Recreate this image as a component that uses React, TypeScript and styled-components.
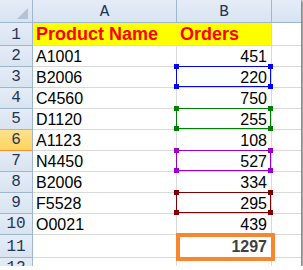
import React from 'react';
import styled, { createGlobalStyle } from 'styled-components';

interface OrderRow {
  product: string;
  orders: number;
  mark?: string;
}

const rows: OrderRow[] = [
  { product: 'A1001', orders: 451 },
  { product: 'B2006', orders: 220, mark: '#0000ff' },
  { product: 'C4560', orders: 750 },
  { product: 'D1120', orders: 255, mark: '#008000' },
  { product: 'A1123', orders: 108 },
  { product: 'N4450', orders: 527, mark: '#9900cc' },
  { product: 'B2006', orders: 334 },
  { product: 'F5528', orders: 295, mark: '#800000' },
  { product: 'O0021', orders: 439 },
];

// sum of the marked cells (220 + 255 + 527 + 295)
const total = rows.filter((r) => r.mark).reduce((sum, r) => sum + r.orders, 0);

const GlobalStyle = createGlobalStyle`
  html, body {
    margin: 0;
    padding: 0;
    background: #ffffff;
  }
`;

const App = () => {
  return (
    <>
      <GlobalStyle />
      <Frame>
        <Sheet>
          <Corner>
            <svg width="11" height="11" viewBox="0 0 11 11">
              <polygon points="11,0 11,11 0,11" fill="#b3c3d6" />
            </svg>
          </Corner>
          <ColHead>A</ColHead>
          <ColHead>B</ColHead>
          <ColHead />

          <RowHead>1</RowHead>
          <Cell $fill="#ffff00" $noRight>
            <Title>Product Name</Title>
          </Cell>
          <Cell $fill="#ffff00">
            <Title>Orders</Title>
          </Cell>
          <Cell />

          {rows.map((row, i) => (
            <React.Fragment key={i}>
              <RowHead $active={i + 2 === 6}>{i + 2}</RowHead>
              <Cell>{row.product}</Cell>
              <Cell $right>
                {row.orders}
                {row.mark && (
                  <Marquee $color={row.mark}>
                    <Handle $color={row.mark} $top $left />
                    <Handle $color={row.mark} $top />
                    <Handle $color={row.mark} $left />
                    <Handle $color={row.mark} />
                  </Marquee>
                )}
              </Cell>
              <Cell />
            </React.Fragment>
          ))}

          <RowHead>11</RowHead>
          <Cell />
          <Cell $right>
            <Total>{total}</Total>
            <TotalBox />
          </Cell>
          <Cell />

          <RowHead>12</RowHead>
          <Cell />
          <Cell />
          <Cell />
        </Sheet>
      </Frame>
    </>
  );
};

export default App;

const Frame = styled.div`
  width: 301px;
  height: 266px;
  overflow: hidden;
  background: #ffffff;
  box-shadow: 1px 1px 3px 1px rgba(0, 0, 0, 0.55);
`;

const Sheet = styled.div`
  display: grid;
  grid-template-columns: 33px 144px 95px 30px;
  grid-template-rows: 23px 23px repeat(9, 21px) 23px 21px;
  font-family: 'Liberation Sans', Arial, sans-serif;
  font-size: 16px;
  color: #000000;
`;

const Header = styled.div`
  box-sizing: border-box;
  background: linear-gradient(#e4ecf7, #d9e4f1);
  border-right: 1px solid #9eb6ce;
  border-bottom: 1px solid #9eb6ce;
  font-family: 'Liberation Mono', 'DejaVu Sans Mono', monospace;
  font-size: 16px;
  color: #1f3656;
  display: flex;
`;

const Corner = styled(Header)`
  align-items: flex-end;
  justify-content: flex-end;
  padding: 0 4px 3px 0;
`;

const ColHead = styled(Header)`
  align-items: center;
  justify-content: center;
  padding-top: 2px;
`;

const RowHead = styled(Header)<{ $active?: boolean }>`
  align-items: flex-end;
  justify-content: center;
  line-height: 19px;
  ${(p) =>
    p.$active &&
    `
    background: linear-gradient(#ffe28f, #ffd35c);
    border-bottom-color: #f29436;
  `}
`;

const Cell = styled.div<{ $fill?: string; $right?: boolean; $noRight?: boolean }>`
  position: relative;
  box-sizing: border-box;
  background: ${(p) => p.$fill || '#ffffff'};
  border-right: 1px solid ${(p) => (p.$noRight ? p.$fill : p.$fill ? '#d4d4d4' : '#d9d9d9')};
  border-bottom: 1px solid #d9d9d9;
  display: flex;
  align-items: flex-end;
  justify-content: ${(p) => (p.$right ? 'flex-end' : 'flex-start')};
  padding: 0 ${(p) => (p.$right ? '4px' : '0')} 0 3px;
  white-space: nowrap;
  overflow: visible;
`;

const Title = styled.span`
  font-size: 18px;
  font-weight: bold;
  color: #ff0000;
  line-height: 21px;
  position: relative;
  z-index: 2;
`;

const Marquee = styled.div<{ $color: string }>`
  position: absolute;
  top: -1px;
  left: -1px;
  right: 0;
  bottom: 0;
  border: 1px solid ${(p) => p.$color};
  z-index: 3;
`;

const Handle = styled.span<{ $color: string; $top?: boolean; $left?: boolean }>`
  position: absolute;
  width: 5px;
  height: 5px;
  background: ${(p) => p.$color};
  ${(p) => (p.$top ? 'top: -3px;' : 'bottom: -3px;')}
  ${(p) => (p.$left ? 'left: -3px;' : 'right: -3px;')}
`;

const Total = styled.span`
  font-weight: bold;
  color: #3f3f3f;
  line-height: 21px;
`;

const TotalBox = styled.div`
  position: absolute;
  top: -2px;
  left: -1px;
  right: -4px;
  bottom: -4px;
  border: 4px solid #f7862f;
  z-index: 3;
`;
